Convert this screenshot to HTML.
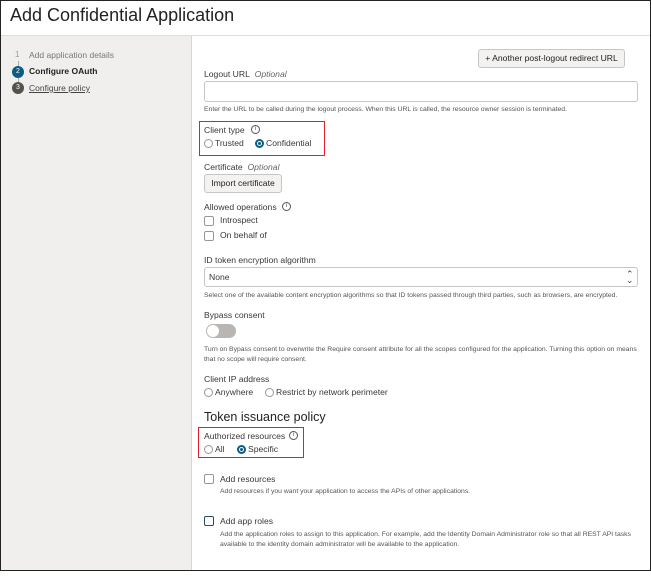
<!DOCTYPE html>
<html><head><style>
*{box-sizing:border-box;margin:0;padding:0}
body{width:651px;height:576px;background:#fff;font-family:"Liberation Sans",sans-serif;color:#161513;position:relative;overflow:hidden}
.a{position:absolute;white-space:nowrap}
.frame{position:absolute;left:0;top:0;width:651px;height:576px;border:1px solid #222}
.t{font-size:8.6px;color:#3a3836}
.s{font-size:6.8px;color:#555}
.rad{position:absolute;width:9px;height:9px;border-radius:50%;border:1px solid #9a9896;background:#fff}
.rad.on{border:2.5px solid #0b5c80;background:#fff;box-shadow:inset 0 0 0 1px #fff}
.rad.on::after{content:"";position:absolute;left:0.5px;top:0.5px;width:3px;height:3px;border-radius:50%;background:#0b5c80}
.cb{position:absolute;width:10px;height:10px;border:1px solid #9a9896;border-radius:2px;background:#fff}
.info{position:absolute;width:9px;height:9px;border:1px solid #555;border-radius:50%;font-size:6px;font-style:italic;text-align:center;line-height:7px;color:#444}
.red{position:absolute;border:1.3px solid #e0202a}
.inp{position:absolute;border:1px solid #c8c6c4;border-radius:3px;background:#fff}
.btn{position:absolute;border:1px solid #c8c6c4;border-radius:3px;background:#f3f2f1;font-size:8.6px;color:#222;text-align:center}
</style></head><body>
<div class="a" style="left:10px;top:5px;font-size:18px;color:#222">Add Confidential Application</div>
<div class="a" style="left:1px;top:35px;width:649px;height:1px;background:#ddd"></div>
<div class="a" style="left:1px;top:36px;width:190px;height:534px;background:#f1efed"></div>
<div class="a" style="left:191px;top:36px;width:1px;height:534px;background:#d8d6d4"></div>
<div class="a" style="left:18px;top:61px;width:1px;height:6px;background:#aaa"></div>
<div class="a" style="left:18px;top:78px;width:1px;height:5px;background:#aaa"></div>
<div class="a" style="left:15px;top:50px;font-size:8px;color:#999">1</div>
<div class="a" style="left:29px;top:50px;font-size:8.5px;color:#777">Add application details</div>
<div class="a" style="left:12px;top:66px;width:12px;height:12px;border-radius:50%;background:#0b5c80;color:#fff;font-size:7px;text-align:center;line-height:12px">2</div>
<div class="a" style="left:29px;top:66px;font-size:8.5px;font-weight:bold;color:#222">Configure OAuth</div>
<div class="a" style="left:12px;top:82px;width:12px;height:12px;border-radius:50%;background:#55514d;color:#fff;font-size:7px;text-align:center;line-height:12px">3</div>
<div class="a" style="left:29px;top:83px;font-size:8.5px;color:#444;text-decoration:underline">Configure policy</div>

<div class="btn" style="left:478px;top:49px;width:147px;height:19px;line-height:17px">+ Another post-logout redirect URL</div>
<div class="a t" style="left:204px;top:69px">Logout URL&nbsp; <i style="color:#666">Optional</i></div>
<div class="inp" style="left:204px;top:81px;width:434px;height:21px"></div>
<div class="a s" style="left:204px;top:106px">Enter the URL to be called during the logout process. When this URL is called, the resource owner session is terminated.</div>
<div class="red" style="left:199px;top:121px;width:126px;height:35px"></div>
<div class="a t" style="left:204px;top:125px">Client type</div>
<div class="info" style="left:251px;top:125px">i</div>
<div class="rad" style="left:204px;top:139px"></div>
<div class="a t" style="left:215px;top:138px">Trusted</div>
<div class="rad on" style="left:255px;top:139px"></div>
<div class="a t" style="left:266px;top:138px">Confidential</div>
<div class="a t" style="left:204px;top:162px">Certificate&nbsp; <i style="color:#666">Optional</i></div>
<div class="btn" style="left:204px;top:174px;width:78px;height:19px;line-height:17px">Import certificate</div>
<div class="a t" style="left:204px;top:202px">Allowed operations</div>
<div class="info" style="left:282px;top:202px">i</div>
<div class="cb" style="left:204px;top:216px"></div>
<div class="a t" style="left:220px;top:215px">Introspect</div>
<div class="cb" style="left:204px;top:231px"></div>
<div class="a t" style="left:220px;top:230px">On behalf of</div>
<div class="a t" style="left:204px;top:255px">ID token encryption algorithm</div>
<div class="inp" style="left:204px;top:267px;width:434px;height:20px"></div>
<div class="a t" style="left:209px;top:272px">None</div>
<div class="a" style="left:626px;top:269px;font-size:9px;color:#444">⌃</div>
<div class="a" style="left:626px;top:275px;font-size:9px;color:#444">⌄</div>
<div class="a s" style="left:204px;top:292px">Select one of the available content encryption algorithms so that ID tokens passed through third parties, such as browsers, are encrypted.</div>
<div class="a t" style="left:204px;top:310px">Bypass consent</div>
<div class="a" style="left:206px;top:324px;width:30px;height:14px;border-radius:7px;background:#b8b5b2"></div>
<div class="a" style="left:207px;top:325px;width:12px;height:12px;border-radius:50%;background:#fff"></div>
<div class="a s" style="left:204px;top:345px;line-height:10px">Turn on Bypass consent to overwrite the Require consent attribute for all the scopes configured for the application. Turning this option on means<br>that no scope will require consent.</div>
<div class="a t" style="left:204px;top:374px">Client IP address</div>
<div class="rad" style="left:204px;top:388px"></div>
<div class="a t" style="left:215px;top:387px">Anywhere</div>
<div class="rad" style="left:265px;top:388px"></div>
<div class="a t" style="left:276px;top:387px">Restrict by network perimeter</div>
<div class="a" style="left:204px;top:410px;font-size:12.5px;color:#222">Token issuance policy</div>
<div class="red" style="left:198px;top:427px;width:106px;height:31px"></div>
<div class="a t" style="left:204px;top:431px">Authorized resources</div>
<div class="info" style="left:289px;top:431px">i</div>
<div class="rad" style="left:204px;top:445px"></div>
<div class="a t" style="left:215px;top:444px">All</div>
<div class="rad on" style="left:237px;top:445px"></div>
<div class="a t" style="left:248px;top:444px">Specific</div>
<div class="cb" style="left:204px;top:474px"></div>
<div class="a t" style="left:220px;top:474px">Add resources</div>
<div class="a s" style="left:220px;top:488px">Add resources if you want your application to access the APIs of other applications.</div>
<div class="cb" style="left:204px;top:516px;border:1.5px solid #2b4a5a"></div>
<div class="a t" style="left:220px;top:516px">Add app roles</div>
<div class="a s" style="left:220px;top:530px;line-height:10px">Add the application roles to assign to this application. For example, add the Identity Domain Administrator role so that all REST API tasks<br>available to the identity domain administrator will be available to the application.</div>
<div class="a" style="left:0;top:570px;width:651px;height:6px;background:#fff;border-top:1px solid #222"></div>
<div class="frame" style="height:571px"></div>
</body></html>
